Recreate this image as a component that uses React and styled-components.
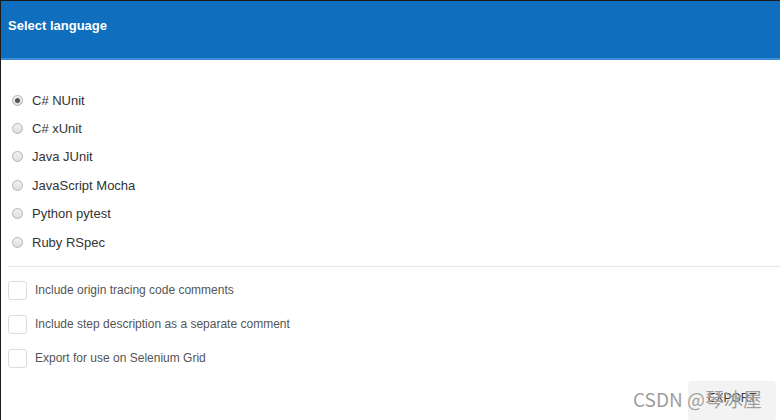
import React, { useState } from 'react';
import styled, { createGlobalStyle } from 'styled-components';

const GlobalStyle = createGlobalStyle`
  html, body {
    margin: 0;
    padding: 0;
    background: #fff;
  }
  * {
    box-sizing: border-box;
  }
`;

const Frame = styled.div`
  position: relative;
  width: 780px;
  height: 420px;
  overflow: hidden;
  border-top: 1px solid #1b1b1b;
  border-left: 1px solid #1b1b1b;
  font-family: 'Liberation Sans', Arial, sans-serif;
  display: flex;
  flex-direction: column;
`;

const Header = styled.div`
  height: 59px;
  flex-shrink: 0;
  background: #0f6ebd;
  border-bottom: 2px solid #3a8dd6;
  display: flex;
  align-items: center;
  padding: 0 0 8px 7px;
`;

const Title = styled.h2`
  margin: 0;
  color: #fff;
  font-size: 13px;
  font-weight: bold;
`;

const Body = styled.div`
  flex: 1;
  padding-top: 26px;
  display: flex;
  flex-direction: column;
`;

const RadioList = styled.div`
  display: flex;
  flex-direction: column;
  padding-left: 11px;
`;

const RadioRow = styled.label`
  height: 28.4px;
  display: flex;
  align-items: center;
  gap: 9px;
  font-size: 13px;
  color: #333;
  cursor: pointer;
`;

const RadioDot = styled.span`
  width: 11px;
  height: 11px;
  border-radius: 50%;
  border: 1px solid #b3b3b3;
  background: linear-gradient(#f2f2f2, #dedede);
  display: flex;
  align-items: center;
  justify-content: center;

  &::after {
    content: '';
    width: 5px;
    height: 5px;
    border-radius: 50%;
    background: ${(p) => (p.$checked ? '#555' : 'transparent')};
  }
`;

const Divider = styled.hr`
  margin: 10px 0 6px 7px;
  border: 0;
  border-top: 1px solid #e6e6e6;
`;

const CheckList = styled.div`
  display: flex;
  flex-direction: column;
  padding-left: 7px;
`;

const CheckRow = styled.label`
  height: 34px;
  display: flex;
  align-items: center;
  gap: 8px;
  font-size: 12px;
  color: #555;
  cursor: pointer;
`;

const Box = styled.span`
  width: 19px;
  height: 19px;
  border: 1px solid #dcdcdc;
  border-radius: 3px;
  background: #fff;
  color: #0f6ebd;
  font-size: 13px;
  line-height: 17px;
  text-align: center;
`;

const Footer = styled.div`
  display: flex;
  justify-content: flex-end;
  padding: 6px 4px 0 0;
`;

const ExportButton = styled.button`
  width: 88px;
  height: 40px;
  border: 0;
  border-radius: 4px;
  background: #f3f3f3;
  color: #333;
  font-family: 'Liberation Sans', Arial, sans-serif;
  font-size: 12px;
  padding: 0 0 7px;
  display: flex;
  align-items: center;
  justify-content: center;
`;

const Watermark = styled.div`
  position: absolute;
  left: 632px;
  top: 384px;
  font-family: 'Noto Sans CJK SC', 'Noto Sans', sans-serif;
  font-size: 19px;
  color: rgba(140, 140, 140, 0.85);
  text-shadow: 0 0 1px rgba(255, 255, 255, 0.8);
  white-space: nowrap;
  pointer-events: none;
`;

const languages = [
  'C# NUnit',
  'C# xUnit',
  'Java JUnit',
  'JavaScript Mocha',
  'Python pytest',
  'Ruby RSpec',
];

const options = [
  'Include origin tracing code comments',
  'Include step description as a separate comment',
  'Export for use on Selenium Grid',
];

export default function App() {
  const [lang, setLang] = useState(0);
  const [flags, setFlags] = useState([false, false, false]);

  return (
    <>
      <GlobalStyle />
      <Frame>
        <Header>
          <Title>Select language</Title>
        </Header>
        <Body>
          <RadioList>
            {languages.map((name, i) => (
              <RadioRow key={name} onClick={() => setLang(i)}>
                <RadioDot $checked={lang === i} />
                {name}
              </RadioRow>
            ))}
          </RadioList>
          <Divider />
          <CheckList>
            {options.map((text, i) => (
              <CheckRow
                key={text}
                onClick={() =>
                  setFlags((f) => f.map((v, j) => (j === i ? !v : v)))
                }
              >
                <Box>{flags[i] ? '✓' : ''}</Box>
                {text}
              </CheckRow>
            ))}
          </CheckList>
          <Footer>
            <ExportButton>EXPORT</ExportButton>
          </Footer>
        </Body>
        <Watermark>CSDN @琴冰屋</Watermark>
      </Frame>
    </>
  );
}
